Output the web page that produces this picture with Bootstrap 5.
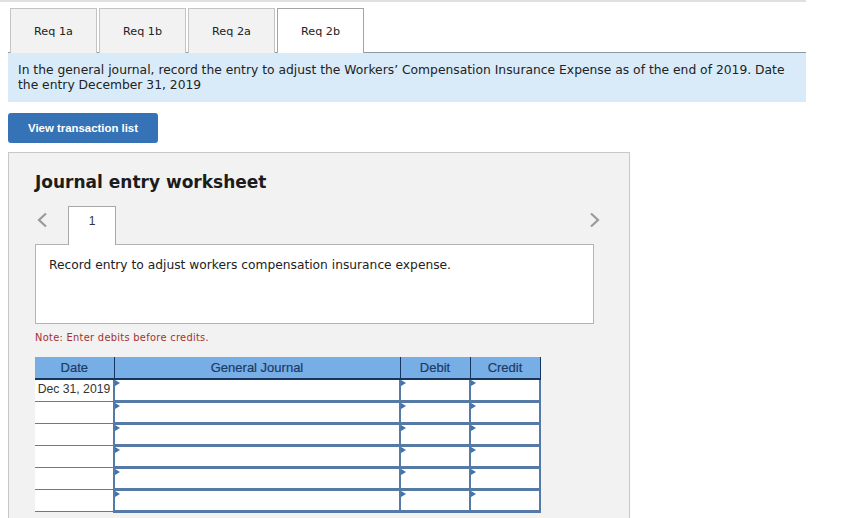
<!DOCTYPE html>
<html lang="en">
<head>
<meta charset="utf-8">
<title>Journal entry worksheet</title>
<link href="https://cdn.jsdelivr.net/npm/bootstrap@5.3.0/dist/css/bootstrap.min.css" rel="stylesheet">
<style>
html,body{height:518px;overflow:hidden;background:#fff}
body{font-family:"DejaVu Sans",sans-serif;font-size:12px;color:#222;line-height:15px}
.shell{width:806px;border-top:2px solid #e0e0e0}
.req-tabs{padding:6px 0 0 2px;margin-left:8px;gap:2px;border-bottom:1px solid #8c9aa3;height:51px;flex-wrap:nowrap}
.req-tab{width:87px;height:45px;background:#f2f2f2;border:1px solid #c4c4c4;border-bottom:0;display:flex;align-items:center;justify-content:center;font-size:11.2px;color:#222}
.req-tab.on{background:#fff;border-color:#a4a4a4;position:relative;z-index:1}
.prompt{margin-left:8px;background:#d9ebf9;height:49px;padding:10px 16px 0 10px;font-size:12.32px;line-height:15px;color:#222}
.view-btn{margin:11px 0 9px 8px;width:150px;height:30px;background:#3672b6;border:0;border-radius:3px;color:#fff;font:bold 11.4px/30px "Liberation Sans",sans-serif;padding:0;display:block}
.view-btn:hover{background:#3672b6;color:#fff}
.sheet{margin-left:8px;width:622px;height:380px;background:#f2f2f2;border:1px solid #c8c8c8;padding:20px 0 0 26px}
.sheet-title{font-size:17px;font-weight:700;line-height:20px;margin:-1px 0 14px;color:#1c1c1c}
.pager{width:559px;height:39px;position:relative;z-index:1}
.pager svg{display:block;margin-top:6px;flex:none}
.pager .next{margin-right:-8px}
.pager-num{width:48px;height:39px;margin-left:19px;background:#fff;border:1px solid #a8a8a8;border-bottom:0;font:12px/28px "Liberation Sans",sans-serif;text-align:center;color:#333}
.task{width:559px;height:80px;margin-top:-1px;background:#fff;border:1px solid #b4b4b4;padding:12px 13px;font-size:12.25px;line-height:17px;color:#222}
.note{font-size:9.85px;line-height:13px;color:#a5302f;margin:7px 0 13px;letter-spacing:.03em}
.jr{width:505px;table-layout:fixed;border-collapse:collapse;font-family:"Liberation Sans",sans-serif;font-size:12.2px;margin:0}
.jr th{background:#78aee6;color:#1b3a66;font-size:13px;font-weight:400;text-align:center;height:22px;padding:0 0 1px;border-bottom:2px solid #14365f;border-right:1px solid #14365f;-webkit-text-stroke:.2px #1b3a66}
.jr td{height:22px;padding:0;background:#fff;position:relative}
.jr td.when{border-bottom:1px solid #777;color:#333;text-align:center;vertical-align:top;line-height:18px;white-space:nowrap}
.jr td.cell{border:3px solid #547aa5;border-left-width:2px;border-right-width:2px}
.jr tr:first-child td.cell{border-top:2px solid #1f4470}
.cell::before{content:"";position:absolute;left:0;top:0;border-left:5px solid #3d74b4;border-top:3.5px solid transparent;border-bottom:3.5px solid transparent}
</style>
</head>
<body>
<div class="shell">
  <ul class="nav req-tabs">
    <li class="req-tab">Req 1a</li>
    <li class="req-tab">Req 1b</li>
    <li class="req-tab">Req 2a</li>
    <li class="req-tab on">Req 2b</li>
  </ul>
  <div class="prompt">In the general journal, record the entry to adjust the Workers’ Compensation Insurance Expense as of the end of 2019. Date the entry December 31, 2019</div>
  <button type="button" class="btn view-btn">View transaction list</button>
  <div class="sheet">
    <h2 class="sheet-title">Journal entry worksheet</h2>
    <div class="pager d-flex align-items-start">
      <svg width="14" height="16" viewBox="0 0 14 16"><path d="M11 1.5 4 8l7 6.5" fill="none" stroke="#9a9a9a" stroke-width="2.2"/></svg>
      <div class="pager-num">1</div>
      <svg class="next ms-auto" width="14" height="16" viewBox="0 0 14 16"><path d="M3 1.500 10 8l-7 6.500" fill="none" stroke="#9a9a9a" stroke-width="2.2"/></svg>
    </div>
    <div class="task">Record entry to adjust workers compensation insurance expense.</div>
    <p class="note">Note: Enter debits before credits.</p>
    <table class="jr">
      <colgroup><col style="width:79px"><col style="width:286px"><col style="width:70px"><col style="width:70px"></colgroup>
      <thead><tr><th>Date</th><th>General Journal</th><th>Debit</th><th>Credit</th></tr></thead>
      <tbody>
        <tr><td class="when">Dec 31, 2019</td><td class="cell"></td><td class="cell"></td><td class="cell"></td></tr>
        <tr><td class="when"></td><td class="cell"></td><td class="cell"></td><td class="cell"></td></tr>
        <tr><td class="when"></td><td class="cell"></td><td class="cell"></td><td class="cell"></td></tr>
        <tr><td class="when"></td><td class="cell"></td><td class="cell"></td><td class="cell"></td></tr>
        <tr><td class="when"></td><td class="cell"></td><td class="cell"></td><td class="cell"></td></tr>
        <tr><td class="when"></td><td class="cell"></td><td class="cell"></td><td class="cell"></td></tr>
      </tbody>
    </table>
  </div>
</div>
<script src="https://cdn.jsdelivr.net/npm/bootstrap@5.3.0/dist/js/bootstrap.bundle.min.js"></script>
</body>
</html>
